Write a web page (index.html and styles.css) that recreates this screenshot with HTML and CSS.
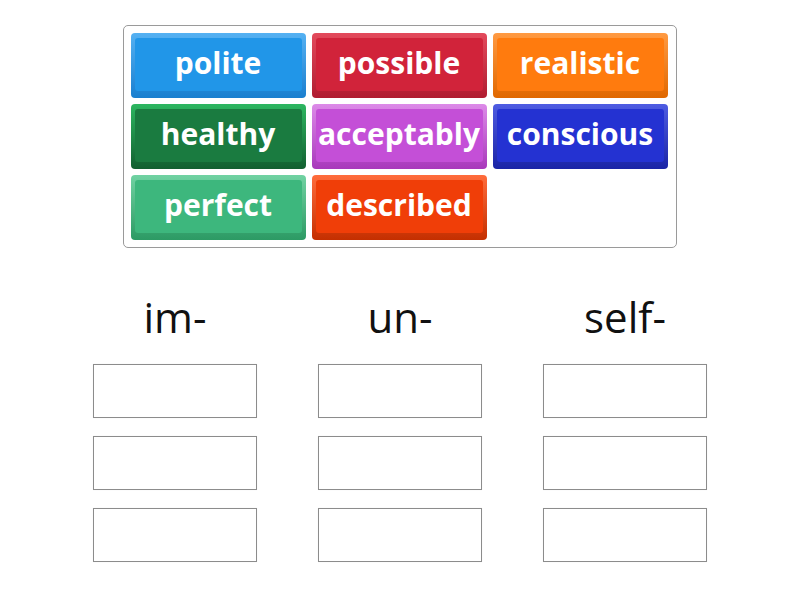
FILE: index.html
```html
<!DOCTYPE html>
<html>
<head>
<meta charset="utf-8">
<link rel="stylesheet" href="styles.css">
</head>
<body>
<div class="page">
  <div class="bank">
    <div class="tile blue"><div class="face">polite</div></div>
    <div class="tile red"><div class="face">possible</div></div>
    <div class="tile orange"><div class="face">realistic</div></div>
    <div class="tile green"><div class="face">healthy</div></div>
    <div class="tile purple"><div class="face">acceptably</div></div>
    <div class="tile navy"><div class="face">conscious</div></div>
    <div class="tile teal"><div class="face">perfect</div></div>
    <div class="tile flame"><div class="face">described</div></div>
  </div>
  <div class="columns">
    <div class="col">
      <div class="head">im-</div>
      <div class="slot"></div><div class="slot"></div><div class="slot"></div>
    </div>
    <div class="col">
      <div class="head">un-</div>
      <div class="slot"></div><div class="slot"></div><div class="slot"></div>
    </div>
    <div class="col">
      <div class="head">self-</div>
      <div class="slot"></div><div class="slot"></div><div class="slot"></div>
    </div>
  </div>
</div>
</body>
</html>
```
FILE: styles.css
```css
html, body {
  margin: 0;
  padding: 0;
  background: #ffffff;
}
.page {
  width: 800px;
  height: 600px;
  padding-top: 25px;
  box-sizing: border-box;
  font-family: "Open Sans", "Liberation Sans", sans-serif;
  display: flex;
  flex-direction: column;
  align-items: center;
}
.bank {
  width: 554px;
  margin-left: -1px;
  box-sizing: border-box;
  border: 1px solid #9a9a9a;
  border-radius: 5px;
  padding: 7px;
  display: grid;
  grid-template-columns: repeat(3, 175px);
  grid-auto-rows: 65px;
  gap: 6px;
}
.tile {
  border-radius: 4px;
  padding: 5px 4px 7px 4px;
  box-sizing: border-box;
  display: flex;
}
.face {
  flex: 1;
  border-radius: 3px;
  display: flex;
  align-items: center;
  justify-content: center;
  color: #ffffff;
  font-weight: 700;
  font-size: 30px;
  padding-bottom: 4px;
  white-space: nowrap;
}
.blue { background: linear-gradient(#55b1f2, #1a7fcf); }
.blue .face { background: #2196e8; }
.red { background: linear-gradient(#e34a5c, #b01c30); }
.red .face { background: #d1233a; }
.orange { background: linear-gradient(#ff9a42, #e06800); }
.orange .face { background: #ff7b0e; }
.green { background: linear-gradient(#2cb660, #125f30); }
.green .face { background: #1a7b40; }
.purple { background: linear-gradient(#dc8ae8, #a838bb); }
.purple .face { background: #c44fd7; }
.navy { background: linear-gradient(#4e5ce2, #1a24a6); }
.navy .face { background: #2432d2; }
.teal { background: linear-gradient(#70d2a2, #2c9a64); }
.teal .face { background: #3db77d; }
.flame { background: linear-gradient(#ff6c3c, #c42f00); }
.flame .face { background: #f03e08; }

.columns {
  margin-top: 40px;
  display: flex;
  gap: 61px;
}
.col {
  width: 164px;
  display: flex;
  flex-direction: column;
  align-items: center;
  gap: 18px;
}
.head {
  font-size: 42px;
  line-height: 57px;
  color: #111111;
  margin-bottom: 1px;
}
.slot {
  width: 164px;
  height: 54px;
  box-sizing: border-box;
  border: 1px solid #8c8c8c;
  background: #ffffff;
  box-shadow: 0 0 1px rgba(0,0,0,0.08);
}
```
